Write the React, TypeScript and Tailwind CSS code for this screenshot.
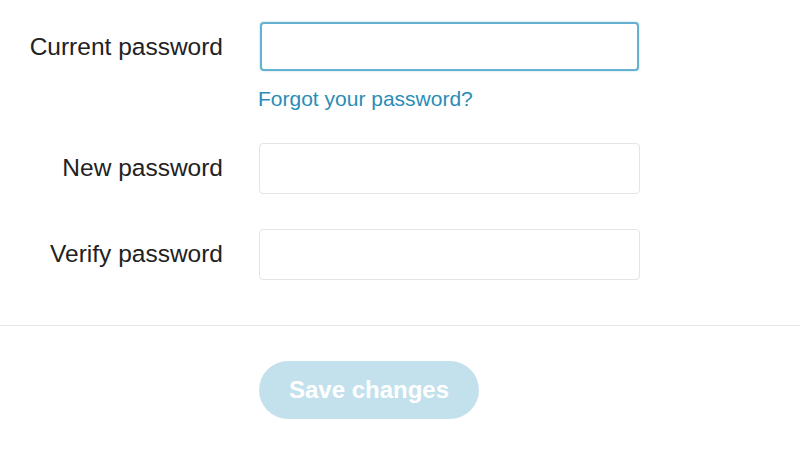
import React from 'react';

const Row: React.FC<{ label: string; focused?: boolean; children?: React.ReactNode }> = ({ label, focused, children }) => (
  <div className="flex items-start">
    <div className="w-[223px] h-[51px] flex items-center justify-end text-[24.5px] text-[#222]">{label}</div>
    <div className="ml-[36px] w-[381px] flex flex-col">
      <input
        type="password"
        className={
          focused
            ? 'h-[49px] w-[379px] ml-px rounded-[4px] border-2 border-[#66b1cf] bg-white outline-none shadow-[0_0_2px_rgba(80,160,200,0.5)]'
            : 'h-[51px] w-[381px] rounded-[4px] border border-[#e2e4e8] bg-white outline-none'
        }
      />
      {children}
    </div>
  </div>
);

export default function App() {
  return (
    <div className="w-[800px] h-[449px] bg-white overflow-hidden" style={{ fontFamily: '"Liberation Sans", Arial, sans-serif' }}>
      <div className="pt-[22px] flex flex-col">
        <Row label="Current password" focused>
          <a href="#" className="mt-[16px] -ml-px text-[21px] leading-[24px] text-[#2b8db5]">Forgot your password?</a>
        </Row>
        <div className="mt-[32px]">
          <Row label="New password" />
        </div>
        <div className="mt-[35px]">
          <Row label="Verify password" />
        </div>
        <div className="mt-[45px] border-t border-[#e6e6e6]" />
        <div className="pl-[259px] pt-[35px]">
          <button className="w-[220px] h-[58px] rounded-full bg-[#c3e1ed] text-white text-[24px] font-bold">Save changes</button>
        </div>
      </div>
    </div>
  );
}
